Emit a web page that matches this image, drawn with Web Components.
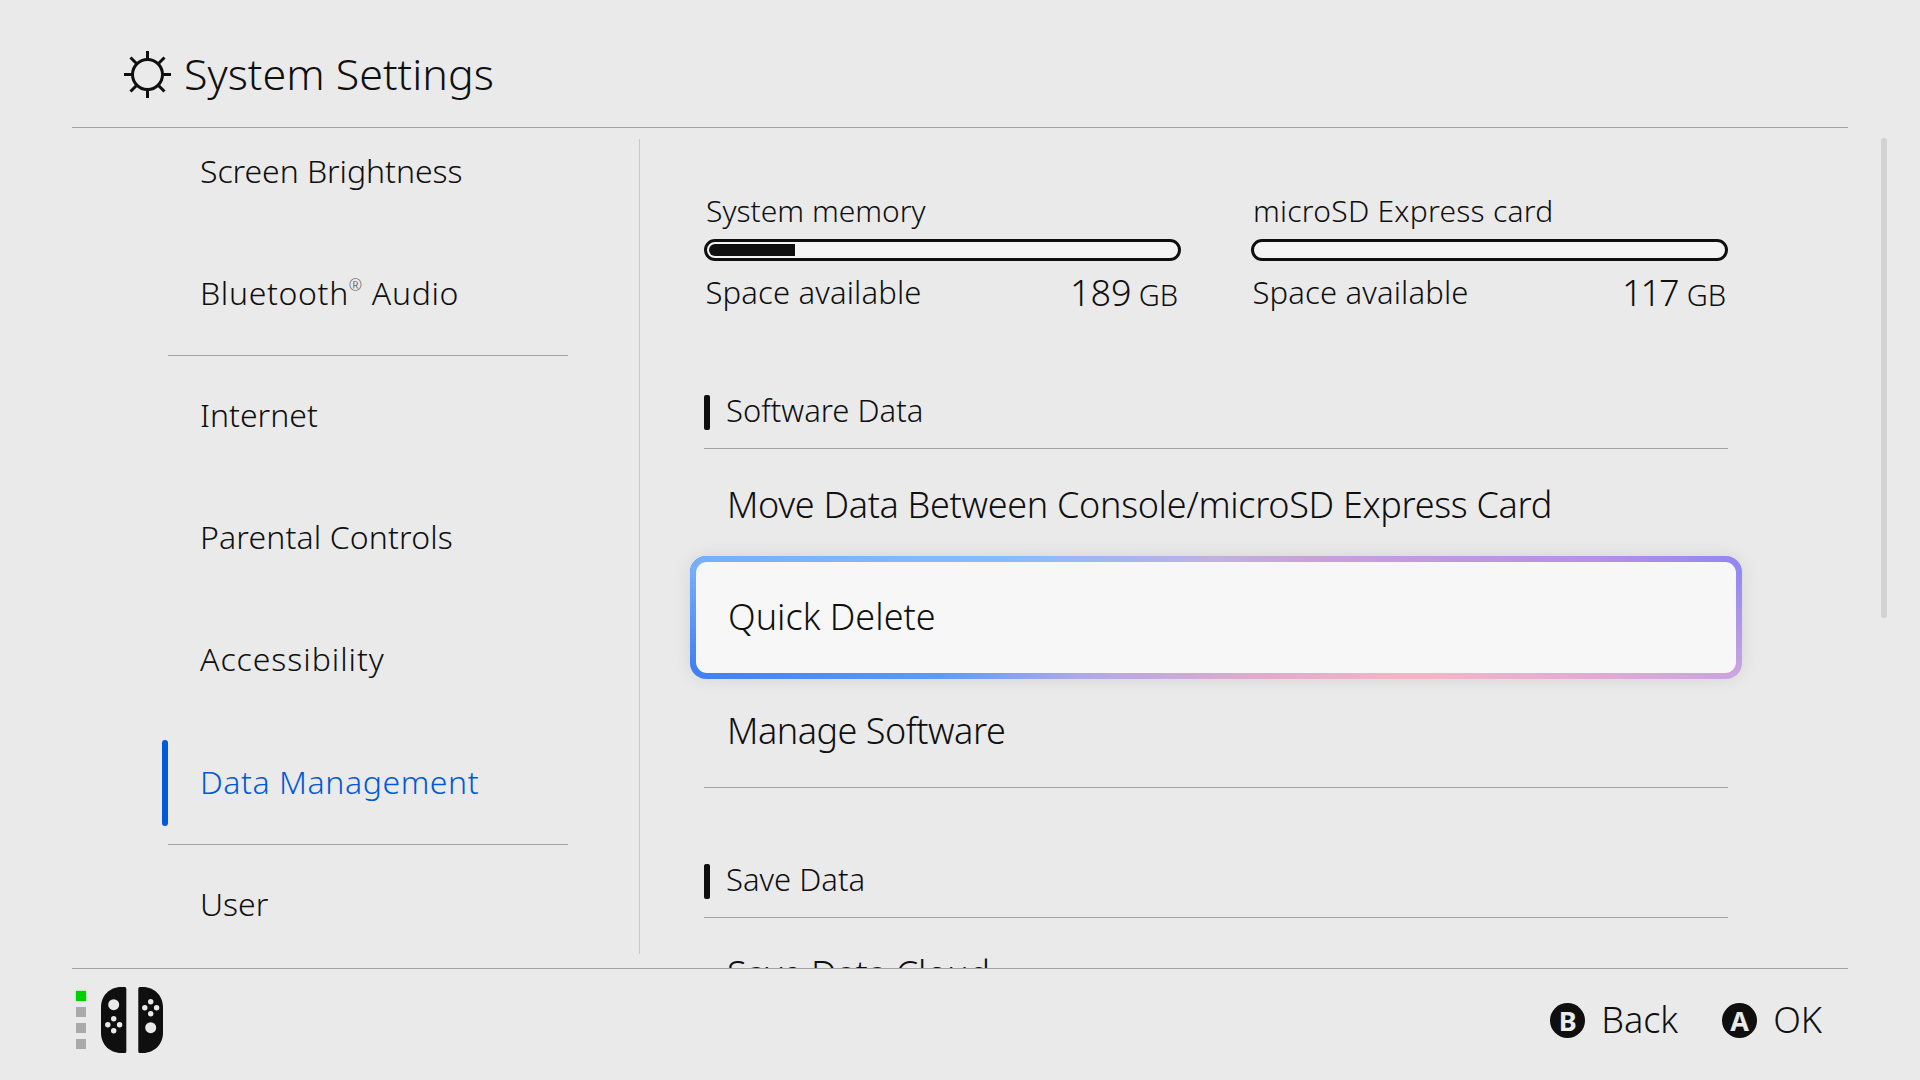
<!DOCTYPE html>
<html lang="en">
<head>
<meta charset="utf-8">
<title>System Settings</title>
<style>
  html, body { margin: 0; padding: 0; background: #eaeaea; }
  body { width: 1920px; height: 1080px; overflow: hidden; font-family: "Noto Sans", "Open Sans", sans-serif; font-weight: 300; color: #0f0f0f; }
</style>
</head>
<body>
<app-shell>
  <app-header slot="header">System Settings</app-header>
  <side-nav slot="nav">
    <nav-item style="letter-spacing:-.07px">Screen Brightness</nav-item>
    <nav-item divided style="letter-spacing:.65px">Bluetooth<sup>®</sup> Audio</nav-item>
    <nav-item>Internet</nav-item>
    <nav-item style="letter-spacing:.14px">Parental Controls</nav-item>
    <nav-item style="letter-spacing:.94px">Accessibility</nav-item>
    <nav-item active divided style="letter-spacing:.57px">Data Management</nav-item>
    <nav-item>User</nav-item>
  </side-nav>
  <content-pane slot="content">
    <storage-summary>
      <storage-meter label="System memory" value="189" fill="18.4"></storage-meter>
      <storage-meter label="microSD Express card" value="117" fill="0" tight></storage-meter>
    </storage-summary>
    <section-head>Software Data</section-head>
    <list-row style="letter-spacing:-.32px">Move Data Between Console/microSD Express Card</list-row>
    <list-row focused>Quick Delete</list-row>
    <list-row last style="letter-spacing:-.49px">Manage Software</list-row>
    <section-head second>Save Data</section-head>
    <list-row style="letter-spacing:-.2px">Save Data Cloud</list-row>
  </content-pane>
  <app-footer slot="footer">
    <controller-status></controller-status>
    <hint-bar>
      <button-hint key="B">Back</button-hint>
      <button-hint key="A">OK</button-hint>
    </hint-bar>
  </app-footer>
</app-shell>

<script>
function define(name, css, html, init) {
  customElements.define(name, class extends HTMLElement {
    constructor() {
      super();
      const r = this.attachShadow({ mode: 'open' });
      r.innerHTML = '<style>' + css + '</style>' + html;
    }
    connectedCallback() { if (init) init(this, this.shadowRoot); }
  });
}

define('app-shell', `
  :host { display: grid; grid-template-rows: 128px 840px 112px; width: 1920px; height: 1080px; position: relative; }
  .main { display: grid; grid-template-columns: 640px 1fr; overflow: hidden; min-height: 0; }
  .thumb { position: absolute; left: 1881px; top: 138px; width: 6px; height: 480px; border-radius: 3px; background: #d2d2d2; }
`, `
  <slot name="header"></slot>
  <div class="main"><slot name="nav"></slot><slot name="content"></slot></div>
  <slot name="footer"></slot>
  <div class="thumb"></div>
`);

define('app-header', `
  :host { display: block; margin: 0 72px; height: 128px; box-sizing: border-box; border-bottom: 1px solid #a3a3a3; }
  .row { display: flex; align-items: center; gap: 13px; height: 127px; padding: 22px 0 0 52px; box-sizing: border-box; }
  svg { width: 47px; height: 47px; flex: none; }
  span { font-size: 43px; line-height: 58px; padding-bottom: 2px; }
`, `
  <div class="row">
    <svg viewBox="0 0 47 47" fill="none" stroke="#0f0f0f" stroke-width="3">
      <circle cx="23.5" cy="23.5" r="15"/>
      <path d="M23.5 0v8.5M23.5 38.5v8.5M0 23.5h8.5M38.5 23.5h8.5M6.5 6.5l6 6M34.5 34.5l6 6M40.5 6.5l-6 6M12.5 34.5l-6 6"/>
    </svg>
    <span><slot></slot></span>
  </div>
`);

define('side-nav', `
  :host { display: block; height: 840px; overflow: hidden; position: relative; }
  .list { margin: -16.5px 72px 0 168px; display: flex; flex-direction: column; }
  .rule { position: absolute; left: 639px; top: 11px; bottom: 14px; width: 1px; background: #c8c8c8; }
`, `<div class="list"><slot></slot></div><div class="rule"></div>`);

define('nav-item', `
  :host { display: flex; align-items: center; height: 122.2px; box-sizing: border-box; padding: 0 0 5px 32px; font-size: 32px; position: relative; }
  :host([divided])::after { content: ""; position: absolute; left: 0; right: 0; bottom: 0; height: 1px; background: #a3a3a3; }
  :host([active]) { color: #0059d6; }
  :host([active])::before { content: ""; position: absolute; left: -6px; top: 18px; width: 6px; height: 86px; border-radius: 3px; background: #0059d6; }
  ::slotted(sup) { font-size: 16px; line-height: 0; position: relative; top: -2px; color: #555; vertical-align: super; }
`, `<span><slot></slot></span>`);

define('content-pane', `
  :host { display: block; height: 840px; overflow: hidden; padding: 63px 192px 0 64px; box-sizing: border-box; }
`, `<slot></slot>`);

define('storage-summary', `
  :host { display: grid; grid-template-columns: 477px 477px; column-gap: 70px; }
`, `<slot></slot>`);

define('storage-meter', `
  :host { display: block; }
  .label { font-size: 30px; line-height: 40px; padding-left: 2px; }
  :host([tight]) .label { letter-spacing: .25px; }
  .bar { margin-top: 8px; height: 22px; box-sizing: border-box; border: 3px solid #0f0f0f; border-radius: 11px; background: #f4f4f4; padding: 2px; overflow: hidden; }
  .fill { height: 100%; background: #0f0f0f; border-radius: 6px 0 0 6px; }
  .foot { margin-top: 12px; height: 42px; display: flex; justify-content: space-between; align-items: flex-start; padding: 0 3px 0 1.5px; }
  .avail { font-size: 31px; line-height: 38px; letter-spacing: .15px; }
  .amount { font-size: 30px; line-height: 40px; }
  .num { font-size: 36px; }
  .unit { font-size: 29px; margin-left: 7px; }
  :host([tight]) .num { letter-spacing: -2px; }
  :host([tight]) .unit { margin-left: 9px; }
  :host([tight]) .foot { padding-right: 2px; }
`, `
  <div class="label"></div>
  <div class="bar"><div class="fill"></div></div>
  <div class="foot"><span class="avail">Space available</span><span class="amount"><span class="num"></span><span class="unit">GB</span></span></div>
`, (el, r) => {
  r.querySelector('.label').textContent = el.getAttribute('label');
  r.querySelector('.num').textContent = el.getAttribute('value');
  r.querySelector('.fill').style.width = el.getAttribute('fill') + '%';
});

define('section-head', `
  :host { display: flex; align-items: center; height: 73px; box-sizing: border-box; border-bottom: 1px solid #a3a3a3; margin-top: 61px; font-size: 31px; }
  :host([second]) { margin-top: 57px; }
  .mark { width: 6px; height: 35px; border-radius: 2px; background: #0f0f0f; margin-right: 16px; flex: none; }
  span { padding-bottom: 4px; }
`, `<div class="mark"></div><span><slot></slot></span>`);

define('list-row', `
  :host { display: flex; align-items: center; height: 112px; box-sizing: border-box; padding: 0 0 2px 23px; font-size: 36px; position: relative; }
  :host([last]) { height: 114px; padding-bottom: 1px; border-bottom: 1px solid #a3a3a3; }
  :host([focused]) {
    height: 123px; margin: -5px -14px; padding-left: 38px; border-radius: 16px;
    background: linear-gradient(90deg, #4080f0 0%, #5c9cf8 24%, #b0a8e8 37%, #e0aacc 54%, #f4b6c6 69%, #e0aad4 86.5%, #c8a4e0 100%);
    box-shadow: 0 0 18px rgba(0,0,0,.09);
    z-index: 1;
  }
  :host([focused])::before {
    content: ""; position: absolute; inset: 0; border-radius: 16px;
    background: linear-gradient(90deg, #76aefc 0%, #85bcff 29.5%, #c0b0e0 50%, #c8a0d8 60%, #b490e8 86.5%, #9088f0 100%);
    -webkit-mask-image: linear-gradient(180deg, #000 0%, #000 10%, transparent 92%);
    mask-image: linear-gradient(180deg, #000 0%, #000 10%, transparent 92%);
  }
  :host([focused])::after {
    content: ""; position: absolute; inset: 6px; border-radius: 11px; background: #f7f7f7;
  }
  span { position: relative; z-index: 1; }
`, `<span><slot></slot></span>`);

define('app-footer', `
  :host { display: flex; align-items: center; justify-content: space-between; margin: 0 72px; height: 112px; box-sizing: border-box; border-top: 1px solid #a3a3a3; position: relative; z-index: 2; background: #eaeaea; padding: 0 26px 9px 4px; }
`, `<slot></slot>`);

define('controller-status', `
  :host { display: flex; align-items: center; gap: 15px; }
  .leds { display: flex; flex-direction: column; gap: 6px; }
  .leds i { display: block; width: 10px; height: 10px; background: #a9a9a9; }
  .leds i:first-child { background: #00d000; box-shadow: 0 0 2px #6fe86f; }
  svg { width: 62px; height: 66px; display: block; }
`, `
  <div class="leds"><i></i><i></i><i></i><i></i></div>
  <svg viewBox="0 0 62 66">
    <path fill="#0f0f0f" d="M25.3 1.5V64.5A1.5 1.5 0 0 1 23.8 66H20C8.5 66 0 57 0 46V20C0 9 8.5 0 20 0H23.8A1.5 1.5 0 0 1 25.3 1.5Z"/>
    <path fill="#0f0f0f" d="M37.3 1.5V64.5A1.5 1.5 0 0 0 38.8 66H42C53.5 66 62 57 62 46V20C62 9 53.5 0 42 0H38.8A1.5 1.5 0 0 0 37.3 1.5Z"/>
    <g fill="#eaeaea">
      <circle cx="12.7" cy="17.7" r="5.5"/>
      <circle cx="12.7" cy="31.7" r="2.7"/><circle cx="12.7" cy="43.7" r="2.7"/><circle cx="6.8" cy="37.7" r="2.7"/><circle cx="18.6" cy="37.7" r="2.7"/>
      <circle cx="49.7" cy="14.7" r="2.7"/><circle cx="49.7" cy="26.7" r="2.7"/><circle cx="43.8" cy="20.7" r="2.7"/><circle cx="55.6" cy="20.7" r="2.7"/>
      <circle cx="49.7" cy="40.7" r="5.5"/>
    </g>
  </svg>
`);

define('hint-bar', `
  :host { display: flex; align-items: center; gap: 44px; }
`, `<slot></slot>`);

define('button-hint', `
  :host { display: flex; align-items: center; gap: 16px; font-size: 36px; }
  span { padding-bottom: 2px; }
  .key { width: 35px; height: 35px; border-radius: 50%; background: #0f0f0f; color: #eaeaea; display: flex; align-items: center; justify-content: center; font-size: 27px; font-weight: 700; line-height: 1; }
`, `<div class="key"></div><span><slot></slot></span>`, (el, r) => {
  r.querySelector('.key').textContent = el.getAttribute('key');
});
</script>
</body>
</html>
